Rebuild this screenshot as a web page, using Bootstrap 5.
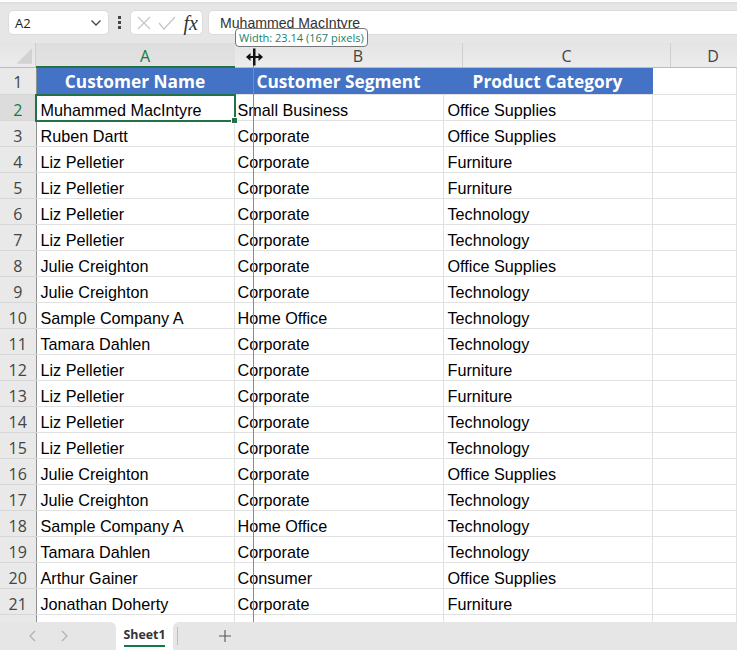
<!DOCTYPE html>
<html lang="en">
<head>
<meta charset="utf-8">
<title>Sheet1</title>
<link href="https://cdn.jsdelivr.net/npm/bootstrap@5.3.0/dist/css/bootstrap.min.css" rel="stylesheet">
<style>
html,body{height:650px;overflow:hidden;background:#fff;margin:0}
.xl-app{position:relative;width:737px;height:650px;overflow:hidden;font-family:"Liberation Sans",Arial,sans-serif}
.xl-ribbon-edge{height:2px;background:#fff;margin-left:10px}
.xl-fbar{height:41px;background:linear-gradient(#dcdcdc 0,#e6e6e6 3px,#e6e6e6 100%);padding:8px 0 8px 8px;gap:5px;align-items:stretch;display:flex}
.xl-box{background:#fff;border:1px solid #dcdcdc;border-radius:5px;height:25px;display:flex;align-items:center}
.xl-name{width:101px;padding:0 6px;font:13px "Open Sans",sans-serif;color:#222;justify-content:space-between}
.xl-dots{width:11px;display:flex;flex-direction:column;align-items:center;justify-content:center;gap:2px}
.xl-dots i{display:block;width:3px;height:3px;background:#444}
.xl-fx{width:73px;justify-content:space-between;padding:0 4px 0 6px}
.xl-fxt{font:italic 20px "Liberation Serif",serif;color:#333;line-height:1}
.xl-formula{flex:1;border-right:0;border-radius:5px 0 0 5px;padding:3px 0 0 11px;font-size:14.1px;color:#333}
.xl-colhead{height:25px;background:linear-gradient(#e4e4e4,#ececec);display:flex;border-bottom:1px solid #bdbdbd;font:16px "Open Sans",sans-serif;color:#444}
.xl-colhead>div{display:flex;align-items:center;justify-content:center;border-right:1px solid #cfcfcf;flex:none;padding-top:1px}
.xl-corner{width:36px}
.xl-corner svg{display:block}
.xl-ca{width:218px;color:#107c41;position:relative;border-right:0!important;background:linear-gradient(#dedede,#e2e2e2) 0 0/199px 100% no-repeat}
.xl-ca::after{content:"";position:absolute;left:0;bottom:-1px;width:199px;height:2px;background:#217346}
.xl-cb{width:209px}
.xl-cc{width:208px}
.xl-cd{width:84px;border-right:0!important}
.xl-sheet{width:737px;border-collapse:collapse;table-layout:fixed;margin:0}
.xl-sheet th,.xl-sheet td{height:26px;padding:6px 0 0 4px;border:1px solid #e1e1e1;border-left:0;border-top:0;font-weight:400;font-size:16.2px;color:#000;white-space:nowrap;overflow:hidden;line-height:1;vertical-align:middle}
.xl-sheet td:nth-child(3){padding-left:3px}
.xl-sheet .xl-num{background:#e9e9e9;border-right:1px solid #8f8f8f;padding:5px 0 0;text-align:center;font:16px/1 "Open Sans",sans-serif;color:#444;border-bottom-color:#d6d6d6}
.xl-sheet .xl-title td{background:#4472c4;color:#fff;font:700 17.3px/1 "Open Sans",sans-serif;text-align:center;padding:2px 0 0;border-color:#4472c4;border-bottom-color:#e1e1e1}
.xl-sheet .xl-title .xl-num{padding:2px 0 0}
.xl-sheet .xl-title td.xl-plain{background:#fff;border-color:#e1e1e1}
.xl-sheet .xl-sel .xl-num{background:#dcdcdc;color:#107c41}
.xl-select{position:absolute;left:35px;top:94px;width:201px;height:28px;border:2px solid #217346}
.xl-handle{position:absolute;left:231px;top:117px;width:7px;height:7px;background:#217346;border:1px solid #fff}
.xl-dragline{position:absolute;left:253px;top:60px;width:1px;height:562px;background:#8a8a8a}
.xl-tip{position:absolute;left:235px;top:28px;height:19px;padding:0 3px;background:#fff;border:1px solid #777;border-radius:4px;font:11px "Open Sans",sans-serif;color:#17806a;line-height:17px;white-space:nowrap}
.xl-cursor{position:absolute;left:245px;top:48px}
.xl-tabs{position:absolute;left:0;right:0;bottom:0;height:28px;display:flex;background:#fff}
.xl-tl{width:116px;background:#e6e6e6;border-radius:0 6px 0 0;display:flex;align-items:center;gap:23px;padding-left:27px}
.xl-tabname{width:57px;font:700 12.4px "Open Sans",sans-serif;color:#333;position:relative;text-align:center;line-height:26px}
.xl-tabname::after{content:"";position:absolute;left:8px;right:8px;bottom:3px;height:2px;background:#107c41}
.xl-tr{flex:1;background:#e6e6e6;border-radius:6px 0 0 0;display:flex;align-items:center;padding-left:4px}
.xl-sep{width:1px;height:18px;background:#bdbdbd}
.xl-plus{margin-left:41px}
</style>
</head>
<body>
<div class="xl-app">
  <div class="xl-ribbon-edge"></div>
  <div class="xl-fbar">
    <div class="xl-box xl-name"><span>A2</span>
      <svg width="12" height="8" viewBox="0 0 12 8"><path d="M1.5 1.5 6 6l4.500-4.500" fill="none" stroke="#444" stroke-width="1.3"/></svg></div>
    <div class="xl-dots"><i></i><i></i><i></i></div>
    <div class="xl-box xl-fx">
      <svg width="14" height="14" viewBox="0 0 14 14"><path d="M1 1l12 12M13 1 1 13" stroke="#c4c4c4" stroke-width="1.2" fill="none"/></svg>
      <svg width="18" height="14" viewBox="0 0 18 14"><path d="M1 7l5 6L17 1" stroke="#c4c4c4" stroke-width="1.2" fill="none"/></svg>
      <span class="xl-fxt">fx</span>
    </div>
    <div class="xl-box xl-formula">Muhammed MacIntyre</div>
  </div>
  <div class="xl-colhead">
    <div class="xl-corner"><svg width="36" height="24" viewBox="0 0 36 24"><path d="M33 4v16H17z" fill="#d2d2d2"/></svg></div>
    <div class="xl-ca">A</div>
    <div class="xl-cb">B</div>
    <div class="xl-cc">C</div>
    <div class="xl-cd">D</div>
  </div>
  <table class="xl-sheet">
    <colgroup><col style="width:36px"><col style="width:198px"><col style="width:209px"><col style="width:209px"><col></colgroup>
    <tbody>
      <tr class="xl-title"><th class="xl-num">1</th><td>Customer Name</td><td>Customer Segment</td><td>Product Category</td><td class="xl-plain"></td></tr>
      <tr class="xl-sel"><th class="xl-num">2</th><td>Muhammed MacIntyre</td><td>Small Business</td><td>Office Supplies</td><td></td></tr>
      <tr><th class="xl-num">3</th><td>Ruben Dartt</td><td>Corporate</td><td>Office Supplies</td><td></td></tr>
      <tr><th class="xl-num">4</th><td>Liz Pelletier</td><td>Corporate</td><td>Furniture</td><td></td></tr>
      <tr><th class="xl-num">5</th><td>Liz Pelletier</td><td>Corporate</td><td>Furniture</td><td></td></tr>
      <tr><th class="xl-num">6</th><td>Liz Pelletier</td><td>Corporate</td><td>Technology</td><td></td></tr>
      <tr><th class="xl-num">7</th><td>Liz Pelletier</td><td>Corporate</td><td>Technology</td><td></td></tr>
      <tr><th class="xl-num">8</th><td>Julie Creighton</td><td>Corporate</td><td>Office Supplies</td><td></td></tr>
      <tr><th class="xl-num">9</th><td>Julie Creighton</td><td>Corporate</td><td>Technology</td><td></td></tr>
      <tr><th class="xl-num">10</th><td>Sample Company A</td><td>Home Office</td><td>Technology</td><td></td></tr>
      <tr><th class="xl-num">11</th><td>Tamara Dahlen</td><td>Corporate</td><td>Technology</td><td></td></tr>
      <tr><th class="xl-num">12</th><td>Liz Pelletier</td><td>Corporate</td><td>Furniture</td><td></td></tr>
      <tr><th class="xl-num">13</th><td>Liz Pelletier</td><td>Corporate</td><td>Furniture</td><td></td></tr>
      <tr><th class="xl-num">14</th><td>Liz Pelletier</td><td>Corporate</td><td>Technology</td><td></td></tr>
      <tr><th class="xl-num">15</th><td>Liz Pelletier</td><td>Corporate</td><td>Technology</td><td></td></tr>
      <tr><th class="xl-num">16</th><td>Julie Creighton</td><td>Corporate</td><td>Office Supplies</td><td></td></tr>
      <tr><th class="xl-num">17</th><td>Julie Creighton</td><td>Corporate</td><td>Technology</td><td></td></tr>
      <tr><th class="xl-num">18</th><td>Sample Company A</td><td>Home Office</td><td>Technology</td><td></td></tr>
      <tr><th class="xl-num">19</th><td>Tamara Dahlen</td><td>Corporate</td><td>Technology</td><td></td></tr>
      <tr><th class="xl-num">20</th><td>Arthur Gainer</td><td>Consumer</td><td>Office Supplies</td><td></td></tr>
      <tr><th class="xl-num">21</th><td>Jonathan Doherty</td><td>Corporate</td><td>Furniture</td><td></td></tr>
      <tr><th class="xl-num"></th><td></td><td></td><td></td><td></td></tr>
    </tbody>
  </table>
  <div class="xl-select"></div>
  <div class="xl-handle"></div>
  <div class="xl-dragline"></div>
  <div class="xl-tip">Width: 23.14 (167 pixels)</div>
  <svg class="xl-cursor" width="19" height="18" viewBox="0 0 19 18"><path d="M8 0.500h2.500v17H8zM1 9l4.500-4v3H13.500V5l4.500 4-4.500 4v-3H5.500v3z" fill="#111"/></svg>
  <div class="xl-tabs">
    <div class="xl-tl">
      <svg width="10" height="12" viewBox="0 0 10 12"><path d="M8 1 3 6l5 5" fill="none" stroke="#b0b0b0" stroke-width="1.2"/></svg>
      <svg width="10" height="12" viewBox="0 0 10 12"><path d="M2 1l5 5-5 5" fill="none" stroke="#b0b0b0" stroke-width="1.2"/></svg>
    </div>
    <div class="xl-tabname">Sheet1</div>
    <div class="xl-tr">
      <div class="xl-sep"></div>
      <svg class="xl-plus" width="12" height="12" viewBox="0 0 12 12"><path d="M6 0v12M0 6h12" stroke="#555" stroke-width="1.1"/></svg>
    </div>
  </div>
</div>
<script src="https://cdn.jsdelivr.net/npm/bootstrap@5.3.0/dist/js/bootstrap.bundle.min.js"></script>
</body>
</html>
